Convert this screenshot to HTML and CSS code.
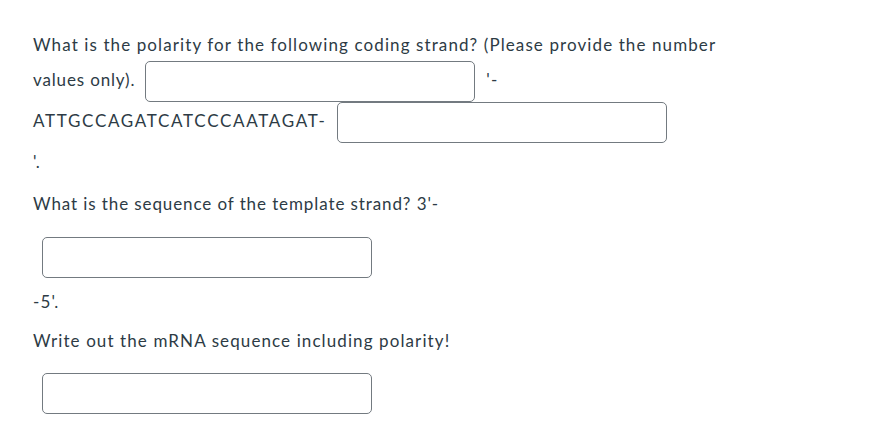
FILE: index.html
```html
<!DOCTYPE html>
<html lang="en">
<head>
<meta charset="utf-8">
<title>Question</title>
<link rel="stylesheet" href="styles.css">
</head>
<body>
<div class="question">
  <p class="line">What is the polarity for the following coding strand? (Please provide the number</p>
  <div class="row row-first">
    <span class="txt txt-values">values only).</span>
    <span class="blank blank-a"></span>
    <span class="txt after">'-</span>
  </div>
  <div class="row">
    <span class="txt txt-seq">ATTGCCAGATCATCCCAATAGAT-</span>
    <span class="blank blank-b"></span>
  </div>
  <p class="line tail">'.</p>

  <p class="line para">What is the sequence of the template strand? 3'-</p>
  <div class="row row-solo">
    <span class="blank blank-c"></span>
  </div>
  <p class="line tail-2">-5'.</p>

  <p class="line para-2">Write out the mRNA sequence including polarity!</p>
  <div class="row row-solo row-last">
    <span class="blank blank-c"></span>
  </div>
</div>
</body>
</html>
```

FILE: styles.css
```css
html, body {
  margin: 0;
  padding: 0;
  background: #ffffff;
}

.question {
  padding: 33px 0 0 33px;
  font-family: Lato, "Noto Sans", sans-serif;
  font-size: 17px;
  line-height: 24px;
  letter-spacing: 1.1px;
  color: #2d3b45;
}

.line {
  margin: 0;
  height: 24px;
  white-space: nowrap;
}

.row {
  display: flex;
  align-items: center;
  height: 41px;
}

.row-first {
  margin-top: 4px;
}

.txt {
  padding-bottom: 3px;
  white-space: nowrap;
}

.txt-values {
  letter-spacing: 0.85px;
}

.txt-seq {
  letter-spacing: 1.7px;
}

.after {
  margin-left: 11px;
}

.blank {
  display: block;
  box-sizing: border-box;
  width: 330px;
  height: 41px;
  border: 1px solid #737a80;
  border-radius: 5px;
  background: #ffffff;
}

.blank-a {
  margin-left: 10px;
}

.blank-b {
  margin-left: 11px;
}

.blank-c {
  margin-left: 9px;
}

.tail {
  margin-top: 7px;
}

.para {
  margin-top: 18px;
  letter-spacing: 0.9px;
}

.row-solo {
  margin-top: 21px;
}

.tail-2 {
  margin-top: 12px;
}

.para-2 {
  margin-top: 15px;
}

.row-last {
  margin-top: 20px;
}
```
